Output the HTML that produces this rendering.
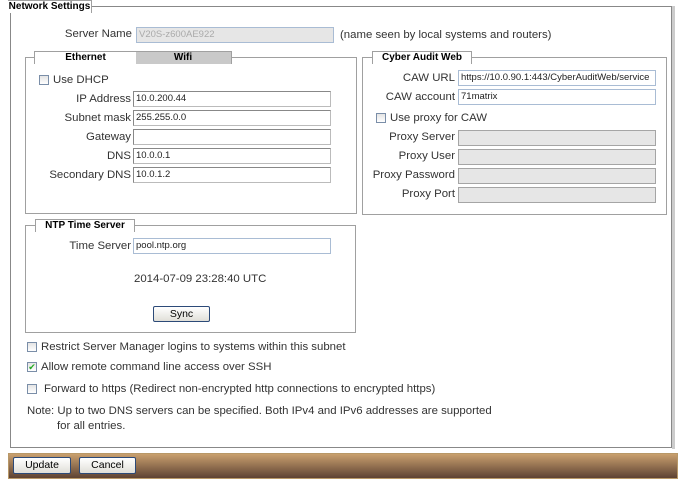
<!DOCTYPE html>
<html><head><style>
*{box-sizing:border-box}
body{margin:0;width:680px;height:484px;background:#fff;font-family:"Liberation Sans",Arial,sans-serif;font-size:11.4px;color:#333;position:relative;overflow:hidden}
.a{position:absolute}
.box{position:absolute;border:1px solid #a0a0a0}
.leg{position:absolute;background:#fff;font-weight:bold;font-size:10px;color:#000;border:1px solid #a0a0a0;border-bottom:none;text-align:center;line-height:12px}
.lbl{position:absolute;text-align:right;font-size:11.4px;color:#333;line-height:15px;white-space:nowrap}
.in{position:absolute;height:16px;border:1px solid #bbb;border-top-color:#888;border-left-color:#888;background:#fff;font-size:9.5px;line-height:14px;padding-left:2px;color:#222;white-space:nowrap;overflow:hidden}
.dis{background:#e6e6e6;border-color:#a5a5a5}
.cb{position:absolute;width:10px;height:10px;border:1px solid #7a8ea8;background:linear-gradient(#e4e4e4,#fff)}
.t{position:absolute;font-size:11.4px;line-height:14px;white-space:nowrap}
.btn{position:absolute;height:16px;border:1px solid #2c4a78;border-radius:2px;background:linear-gradient(#fff,#e0dfd8);font-size:10.5px;text-align:center;line-height:14px;color:#000}
</style></head><body>
<div class="box" style="left:10px;top:6px;width:662px;height:442px;border-color:#888"></div>
<div class="a" style="left:672px;top:6px;width:3px;height:443px;background:#ccc"></div>
<div class="leg" style="left:8px;top:0;width:84px;height:13px;font-size:10px;border-left:none">Network Settings</div>

<div class="lbl" style="left:40px;top:27px;width:92px">Server Name</div>
<div class="in dis" style="left:136px;top:27px;width:198px;color:#aaa;border-color:#a9bcd4">V20S-z600AE922</div>
<div class="t" style="left:340px;top:28px">(name seen by local systems and routers)</div>

<div class="box" style="left:25px;top:57px;width:332px;height:157px"></div>
<div class="leg" style="left:34px;top:51px;width:198px;height:13px;background:#fff"><span style="display:inline-block;width:100px">Ethernet</span><span style="display:inline-block;width:95px;background:#c9c9c9;height:12px">Wifi</span></div>
<div class="cb" style="left:39px;top:75px"></div>
<div class="t" style="left:53px;top:73px">Use DHCP</div>
<div class="lbl" style="left:20px;top:92px;width:111px">IP Address</div>
<div class="in" style="left:133px;top:91px;width:198px">10.0.200.44</div>
<div class="lbl" style="left:20px;top:111px;width:111px">Subnet mask</div>
<div class="in" style="left:133px;top:110px;width:198px">255.255.0.0</div>
<div class="lbl" style="left:20px;top:130px;width:111px">Gateway</div>
<div class="in" style="left:133px;top:129px;width:198px"></div>
<div class="lbl" style="left:20px;top:149px;width:111px">DNS</div>
<div class="in" style="left:133px;top:148px;width:198px">10.0.0.1</div>
<div class="lbl" style="left:20px;top:168px;width:111px">Secondary DNS</div>
<div class="in" style="left:133px;top:167px;width:198px">10.0.1.2</div>

<div class="box" style="left:362px;top:57px;width:305px;height:158px"></div>
<div class="leg" style="left:372px;top:51px;width:100px;height:13px">Cyber Audit Web</div>
<div class="lbl" style="left:360px;top:71px;width:95px">CAW URL</div>
<div class="in" style="left:458px;top:70px;width:198px;border-color:#a9bcd4">https://10.0.90.1:443/CyberAuditWeb/service</div>
<div class="lbl" style="left:360px;top:90px;width:95px">CAW account</div>
<div class="in" style="left:458px;top:89px;width:198px;border-color:#a9bcd4">71matrix</div>
<div class="cb" style="left:376px;top:113px"></div>
<div class="t" style="left:390px;top:111px">Use proxy for CAW</div>
<div class="lbl" style="left:360px;top:130px;width:95px">Proxy Server</div>
<div class="in dis" style="left:458px;top:130px;width:198px"></div>
<div class="lbl" style="left:360px;top:149px;width:95px">Proxy User</div>
<div class="in dis" style="left:458px;top:149px;width:198px"></div>
<div class="lbl" style="left:350px;top:168px;width:105px">Proxy Password</div>
<div class="in dis" style="left:458px;top:168px;width:198px"></div>
<div class="lbl" style="left:360px;top:187px;width:95px">Proxy Port</div>
<div class="in dis" style="left:458px;top:187px;width:198px"></div>

<div class="box" style="left:25px;top:225px;width:331px;height:108px"></div>
<div class="leg" style="left:35px;top:219px;width:100px;height:13px">NTP Time Server</div>
<div class="lbl" style="left:20px;top:239px;width:111px">Time Server</div>
<div class="in" style="left:133px;top:238px;width:198px;border-color:#a9bcd4">pool.ntp.org</div>
<div class="t" style="left:134px;top:272px">2014-07-09 23:28:40 UTC</div>
<div class="btn" style="left:153px;top:306px;width:57px">Sync</div>

<div class="cb" style="left:27px;top:342px"></div>
<div class="t" style="left:41px;top:340px">Restrict Server Manager logins to systems within this subnet</div>
<div class="cb" style="left:27px;top:362px;font-size:9px;line-height:8px;color:#2a2;text-align:center">✔</div>
<div class="t" style="left:41px;top:360px">Allow remote command line access over SSH</div>
<div class="cb" style="left:27px;top:384px"></div>
<div class="t" style="left:44px;top:382px">Forward to https (Redirect non-encrypted http connections to encrypted https)</div>
<div class="t" style="left:27px;top:404px">Note: Up to two DNS servers can be specified. Both IPv4 and IPv6 addresses are supported</div>
<div class="t" style="left:57px;top:419px">for all entries.</div>

<div class="a" style="left:8px;top:453px;width:670px;height:26px;background:linear-gradient(#c9a06e,#5e4233);border:1px solid #b89868"></div>
<div class="btn" style="left:13px;top:457px;width:58px;height:17px">Update</div>
<div class="btn" style="left:79px;top:457px;width:57px;height:17px">Cancel</div>
</body></html>
